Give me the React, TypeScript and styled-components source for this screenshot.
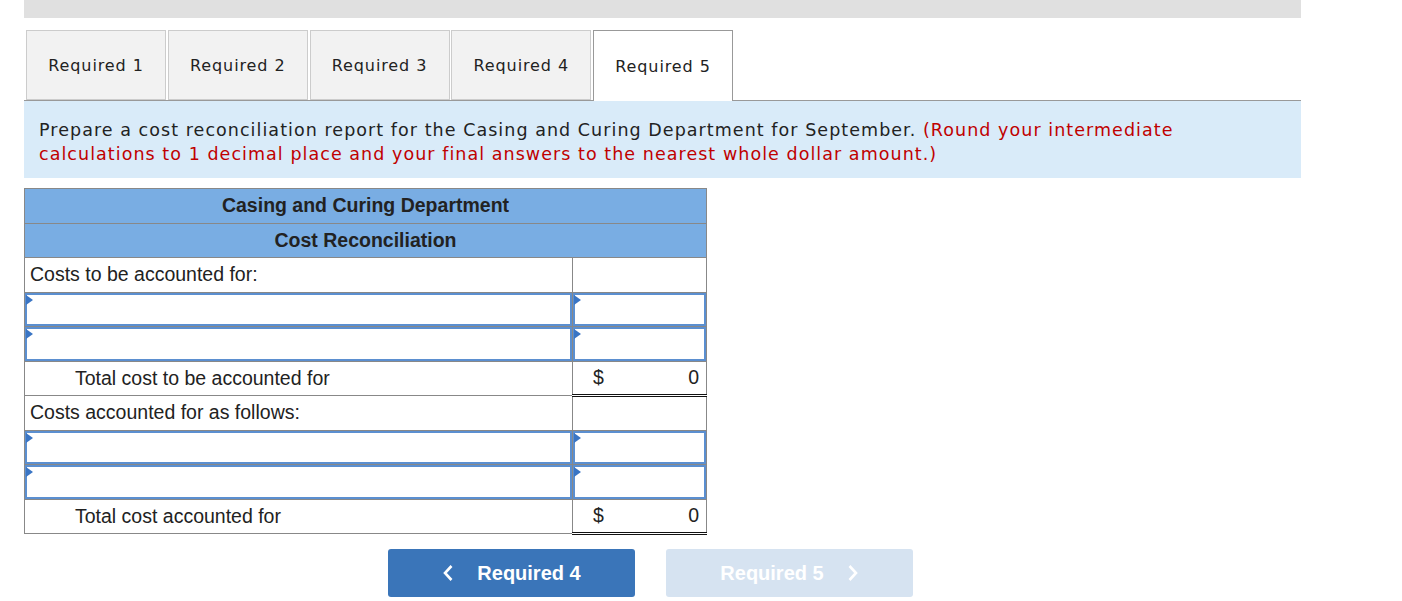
import React from 'react';
import styled, { createGlobalStyle } from 'styled-components';

const GlobalStyle = createGlobalStyle`
  body {
    margin: 0;
    background: #ffffff;
    font-family: "DejaVu Sans", Verdana, sans-serif;
  }
`;

const Page = styled.div`
  width: 1277px;
  margin-left: 24px;
`;

const TopBar = styled.div`
  height: 18px;
  background: #e0e0e0;
`;

const Tabs = styled.div`
  display: flex;
  gap: 1.75px;
  margin-top: 12px;
  padding-left: 2px;
  border-bottom: 1px solid #999999;
  height: 70px;
`;

const Tab = styled.div<{ $active?: boolean }>`
  width: 140px;
  height: ${(p) => (p.$active ? '71px' : '70px')};
  margin-bottom: ${(p) => (p.$active ? '-1px' : '0')};
  box-sizing: border-box;
  border: 1px solid ${(p) => (p.$active ? '#999999' : '#cccccc')};
  border-bottom: ${(p) => (p.$active ? 'none' : '1px solid #cccccc')};
  background: ${(p) => (p.$active ? '#ffffff' : '#f2f2f2')};
  display: flex;
  align-items: center;
  justify-content: center;
  font-size: 16px;
  letter-spacing: 0.9px;
  color: #222222;
`;

const Prompt = styled.div`
  background: #d9ebf9;
  padding: 17px 15px 12px;
  font-size: 17.5px;
  letter-spacing: 1.05px;
  line-height: 24px;
  color: #222222;
`;

const Note = styled.span`
  color: #c00000;
`;

const Sheet = styled.table`
  margin-top: 10px;
  width: 682px;
  border-collapse: collapse;
  font-family: "Liberation Sans", Arial, sans-serif;
  font-size: 19.5px;
  color: #222222;
  table-layout: fixed;
`;

const HeadCell = styled.th`
  background: #79ade3;
  border: 1px solid #888888;
  height: 33.5px;
  padding: 0;
  font-weight: bold;
  font-size: 19.5px;
  text-align: center;
`;

const LabelCell = styled.td<{ $indent?: boolean }>`
  border: 1px solid #888888;
  height: 33.5px;
  padding: 0 0 0 ${(p) => (p.$indent ? '50px' : '5px')};
  white-space: nowrap;
`;

const BlankCell = styled.td`
  border: 1px solid #888888;
  padding: 0;
`;

const InputCell = styled.td`
  border: 1px solid #888888;
  height: 33.5px;
  padding: 0;
  position: relative;
`;

const InputBox = styled.div`
  height: 33.5px;
  box-sizing: border-box;
  border: 2px solid #5b8fd0;
  background: #ffffff;
`;

const Marker = styled.span`
  position: absolute;
  top: 2px;
  left: 1px;
  width: 0;
  height: 0;
  border-top: 5px solid transparent;
  border-bottom: 5px solid transparent;
  border-left: 7px solid #3a75c4;
`;

const TotalCell = styled.td`
  border: 1px solid #888888;
  border-top: 1px solid #111111;
  border-bottom: 3px double #111111;
  height: 31.5px;
  padding: 0 7px 0 20px;
`;

const Amount = styled.div`
  display: flex;
  justify-content: space-between;
`;

const Nav = styled.div`
  display: flex;
  gap: 31px;
  margin: 14px 0 0 364px;
`;

const NavButton = styled.button<{ $disabled?: boolean }>`
  width: 247px;
  height: 48px;
  border: none;
  border-radius: 3px;
  background: ${(p) => (p.$disabled ? '#d6e3f1' : '#3a75b9')};
  color: #ffffff;
  font-family: "Liberation Sans", Arial, sans-serif;
  font-weight: bold;
  font-size: 20px;
  display: flex;
  align-items: center;
  justify-content: center;
  gap: 23px;
  padding: 0;
`;

const Chevron: React.FC<{ dir: 'left' | 'right' }> = ({ dir }) => (
  <svg width="12" height="18" viewBox="0 0 12 18">
    <path
      d={dir === 'left' ? 'M9.5 2 L3 9 L9.5 16' : 'M2.5 2 L9 9 L2.5 16'}
      fill="none"
      stroke="#ffffff"
      strokeWidth="2.6"
    />
  </svg>
);

const InputRow: React.FC = () => (
  <tr>
    <InputCell>
      <InputBox />
      <Marker />
    </InputCell>
    <InputCell>
      <InputBox />
      <Marker />
    </InputCell>
  </tr>
);

const TotalRow: React.FC<{ label: string }> = ({ label }) => (
  <tr>
    <LabelCell $indent>{label}</LabelCell>
    <TotalCell>
      <Amount>
        <span>$</span>
        <span>0</span>
      </Amount>
    </TotalCell>
  </tr>
);

const App: React.FC = () => {
  const tabs = ['Required 1', 'Required 2', 'Required 3', 'Required 4', 'Required 5'];
  return (
    <>
      <GlobalStyle />
      <Page>
        <TopBar />
        <Tabs>
          {tabs.map((t, i) => (
            <Tab key={t} $active={i === 4}>
              {t}
            </Tab>
          ))}
        </Tabs>
        <Prompt>
          Prepare a cost reconciliation report for the Casing and Curing Department for September.{' '}
          <Note>
            (Round your intermediate calculations to 1 decimal place and your final answers to the nearest whole
            dollar amount.)
          </Note>
        </Prompt>
        <Sheet>
          <colgroup>
            <col style={{ width: '548px' }} />
            <col style={{ width: '134px' }} />
          </colgroup>
          <thead>
            <tr>
              <HeadCell colSpan={2}>Casing and Curing Department</HeadCell>
            </tr>
            <tr>
              <HeadCell colSpan={2}>Cost Reconciliation</HeadCell>
            </tr>
          </thead>
          <tbody>
            <tr>
              <LabelCell>Costs to be accounted for:</LabelCell>
              <BlankCell />
            </tr>
            <InputRow />
            <InputRow />
            <TotalRow label="Total cost to be accounted for" />
            <tr>
              <LabelCell>Costs accounted for as follows:</LabelCell>
              <BlankCell />
            </tr>
            <InputRow />
            <InputRow />
            <TotalRow label="Total cost accounted for" />
          </tbody>
        </Sheet>
        <Nav>
          <NavButton>
            <Chevron dir="left" />
            Required 4
          </NavButton>
          <NavButton $disabled>
            Required 5
            <Chevron dir="right" />
          </NavButton>
        </Nav>
      </Page>
    </>
  );
};

export default App;
